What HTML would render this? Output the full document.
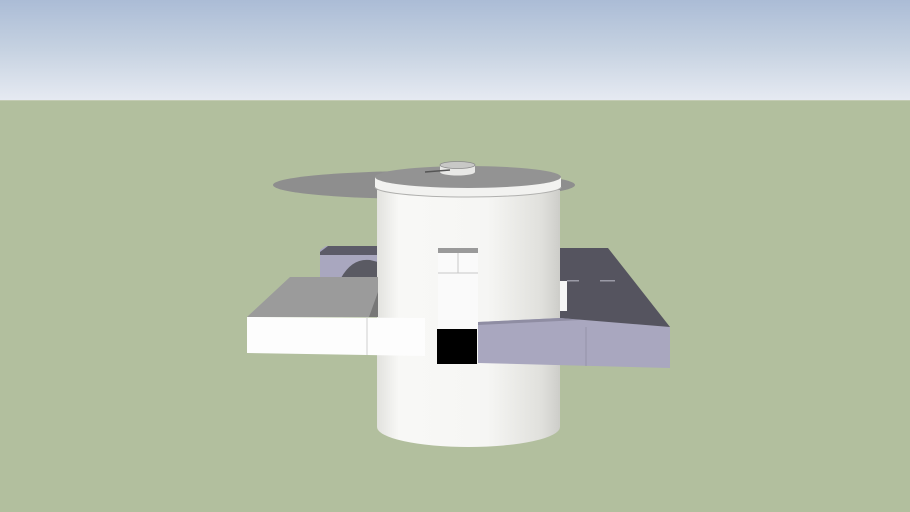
<!DOCTYPE html>
<html><head><meta charset="utf-8"><style>html,body{margin:0;padding:0;width:910px;height:512px;overflow:hidden}svg{display:block}</style></head>
<body>
<svg width="910" height="512" viewBox="0 0 910 512" xmlns="http://www.w3.org/2000/svg">
<defs>
<linearGradient id="sky" x1="0" y1="0" x2="0" y2="1">
<stop offset="0" stop-color="#abbcd6"/><stop offset="0.5" stop-color="#c6d2e1"/><stop offset="1" stop-color="#e6eaf2"/>
</linearGradient>
<linearGradient id="cyl" x1="0" y1="0" x2="1" y2="0">
<stop offset="0" stop-color="#e2e2de"/><stop offset="0.12" stop-color="#f8f8f6"/><stop offset="0.6" stop-color="#f6f6f4"/><stop offset="0.9" stop-color="#e0e0dc"/><stop offset="1" stop-color="#cdcdc9"/>
</linearGradient>
</defs>
<rect x="0" y="0" width="910" height="100" fill="url(#sky)"/>
<rect x="0" y="100" width="910" height="412" fill="#b2bf9e"/>
<rect x="0" y="100" width="910" height="1" fill="#c3cbb3"/>
<!-- back left box -->
<polygon points="320,250 326,246 378,246 378,278 320,278" fill="#a9a7bf"/>
<polygon points="320,252 328,246 378,246 378,255 320,255" fill="#5c5b68"/>
<path d="M341,278 Q352,258 370,260 L378,262 L378,278 Z" fill="#5a5a63"/>
<!-- back right box top -->
<polygon points="556,248 608,248 670,327 560,327" fill="#55545f"/>
<rect x="558" y="281" width="9" height="30" fill="#f6f6f6"/>
<rect x="600" y="280" width="15" height="1.5" fill="#9a9aa6"/>
<rect x="567" y="280" width="12" height="1.5" fill="#9a9aa6"/>
<!-- shadow -->
<ellipse cx="424" cy="185" rx="151" ry="14" fill="#8e8e8e"/>
<!-- cylinder body -->
<path d="M377,190 L560,190 L560,427 A91.5,20 0 0 1 377,427 Z" fill="url(#cyl)"/>
<!-- cap -->
<path d="M375,177 L561,177 L561,187 A93,10 0 0 1 375,187 Z" fill="#f2f2f0"/>
<path d="M375,187 A93,10 0 0 0 561,187" fill="none" stroke="#b0b0ae" stroke-width="1"/>
<ellipse cx="468" cy="177" rx="93" ry="11" fill="#939393"/>
<!-- knob -->
<path d="M440,165 L475,165 L475,172 A17.5,3.5 0 0 1 440,172 Z" fill="#e8e8e6"/>
<ellipse cx="457.5" cy="165" rx="17.5" ry="3.5" fill="#c8c8c6" stroke="#8a8a8a" stroke-width="0.8"/>
<path d="M425,172 L450,170" stroke="#555" stroke-width="1.5"/>
<!-- left front slab -->
<polygon points="247,317 290,277 378,277 378,317" fill="#9b9b9b"/>
<polygon points="378,292 378,317 369,317" fill="#777"/>
<polygon points="247,317 425,318 425,356 247,353" fill="#fdfdfd"/>
<line x1="367" y1="317" x2="367" y2="355" stroke="#cfcfcf" stroke-width="1"/>
<!-- center block -->
<rect x="438" y="248" width="40" height="84" fill="#fafafa"/>
<rect x="438" y="248" width="40" height="5" fill="#9a9a9a"/>
<line x1="438" y1="273" x2="478" y2="273" stroke="#c8c8c8"/>
<line x1="458" y1="253" x2="458" y2="273" stroke="#c8c8c8"/>
<rect x="437" y="329" width="40" height="35" fill="#000"/>
<!-- right front slab -->
<polygon points="478,322 560,318 670,327 670,368 478,363" fill="#a9a7bf"/>
<polygon points="478,322 560,318 580,320 478,325" fill="#8f8da3"/>
<line x1="586" y1="327" x2="586" y2="366" stroke="#9593aa"/>
</svg>
</body></html>
